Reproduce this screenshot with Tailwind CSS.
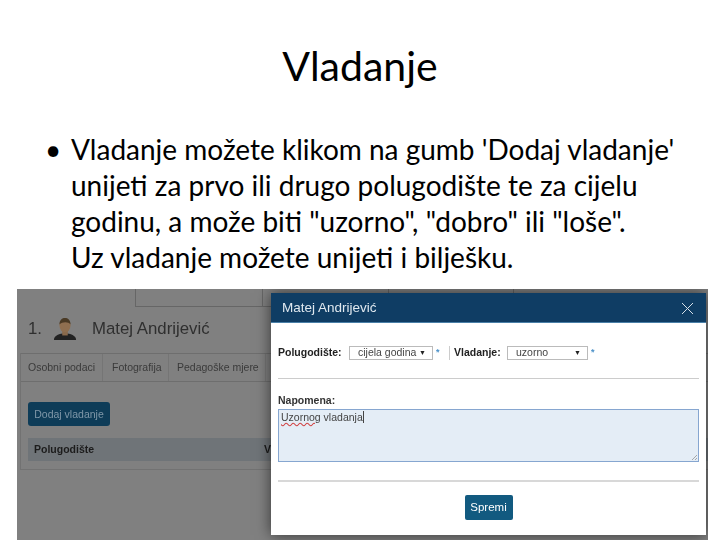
<!DOCTYPE html>
<html lang="en">
<head>
    <meta charset="UTF-8">
    <title>Vladanje</title>
    <script src="https://cdn.jsdelivr.net/npm/@tailwindcss/browser@4"></script>
</head>
<body class="w-[720px] h-[540px] overflow-hidden bg-white font-['Lato',sans-serif] text-black">
    <div class="h-[289px] pt-[41px]">
        <h1 class="text-center text-[41px] leading-[50px] font-normal">Vladanje</h1>
        <ul class="mt-[40px] ml-[45px] w-[650px] text-[28px] leading-[36px]">
            <li class="flex">
                <span class="w-[26px] shrink-0">•</span>
                <span>Vladanje možete klikom na gumb 'Dodaj vladanje' unijeti za prvo ili drugo polugodište te za cijelu godinu, a može biti "uzorno", "dobro" ili "loše".<br>Uz vladanje možete unijeti i bilješku.</span>
            </li>
        </ul>
    </div>

    <!-- screenshot of the app, dimmed behind the dialog -->
    <div class="relative ml-[17px] w-[691px] h-[251px] overflow-hidden bg-[#808080] font-['Liberation_Sans',sans-serif] blur-[0.3px]">
        <div class="flex ml-[118px] h-[18px]">
            <div class="w-[127px] border-l border-b border-[#666]"></div>
            <div class="w-[126px] border-l border-b border-[#666]"></div>
            <div class="w-[125px] border-l border-[#666]"></div>
            <div class="w-[125px] border-l border-[#666]"></div>
        </div>
        <div class="flex items-center mt-[10px] ml-[11px] h-[24px] text-[#2f2f2f] text-[16.8px]">
            <span>1.</span>
            <svg class="ml-[11px] w-[24px] h-[24px]" viewBox="0 0 26 26">
                <path d="M1 25c0-5 6-7 12-7s12 2 12 7z" fill="#222"/>
                <rect x="10" y="14" width="6" height="6" fill="#8a6a4c"/>
                <ellipse cx="13" cy="9" rx="6" ry="7.5" fill="#8f6f50"/>
                <path d="M7 8c0-5 3-7 6-7s6 2 6 7c-2-3-9-3-12 0z" fill="#4a3a25"/>
            </svg>
            <span class="ml-[15px]">Matej Andrijević</span>
        </div>
        <div class="mt-[12px] ml-[3px] h-[117px] border-l border-b border-[#727272]">
            <div class="flex h-[29px] border-t border-b border-[#6e6e6e] text-[10.5px] text-[#3a3a3a] leading-[27px]">
                <span class="w-[82px] pl-[7px] border-r border-[#757575]">Osobni podaci</span>
                <span class="w-[66px] pl-[9px] border-r border-[#757575]">Fotografija</span>
                <span class="w-[97px] pl-[8px] border-r border-[#757575]">Pedagoške mjere</span>
            </div>
            <div class="mt-[20px] ml-[7px] w-[82px] h-[24px] rounded-[3px] bg-[#0e3c58] text-[10.5px] text-[#7f97a8] text-center leading-[24px]">Dodaj vladanje</div>
            <div class="flex items-center mt-[12px] ml-[7px] h-[23px] pl-[6px] bg-[#6f7478] text-[10.5px] font-bold text-[#1c1c1c]">
                <span class="w-[230px]">Polugodište</span>
                <span>V</span>
            </div>
        </div>

        <!-- dialog -->
        <div class="absolute left-[254px] top-[4px] w-[435px] h-[242px] bg-white flex flex-col shadow-[0_0_14px_rgba(0,0,0,0.6)]">
            <div class="flex items-center justify-between h-[30px] pt-px pl-[11px] pr-[12px] bg-[#0f3d64] border-b border-[#4a80a8] text-[13.5px] text-[#dfe8ef]">
                <span>Matej Andrijević</span>
                <svg class="w-[13px] h-[13px]" viewBox="0 0 13 13" stroke="#d6e0e8" stroke-width="1" fill="none"><path d="M1 1l11 11M12 1L1 12"/></svg>
            </div>
            <div class="flex items-center mt-[23px] ml-[7px] h-[14px] text-[10.5px] text-[#444]">
                <b class="w-[64px] font-bold text-[#222]">Polugodište:</b>
                <span class="flex items-center justify-between ml-[7px] w-[84px] h-[14px] pl-[8px] pr-[6px] border border-[#bbb]">cijela godina <i class="text-[7px] not-italic text-[#222]">▼</i></span>
                <span class="w-[16px] pl-[3px] text-[9px] font-bold text-[#4a90c8]">*</span>
                <span class="h-[14px] border-l border-[#ccc]"></span>
                <b class="w-[47px] ml-[4px] font-bold text-[#222]">Vladanje:</b>
                <span class="flex items-center justify-between ml-[6px] w-[81px] h-[14px] pl-[8px] pr-[6px] border border-[#bbb]">uzorno <i class="text-[7px] not-italic text-[#222]">▼</i></span>
                <span class="pl-[3px] text-[9px] font-bold text-[#4a90c8]">*</span>
            </div>
            <div class="mt-[18px] mx-[7px] h-px bg-[#ccc]"></div>
            <div class="mt-[15px] ml-[7px] text-[10.5px] font-bold text-[#333] leading-[12px]">Napomena:</div>
            <div class="relative mt-[3px] mx-[7px] h-[53px] px-[2px] border border-[#86a6d0] bg-[#e4edf6] text-[10.5px] leading-[14px] text-[#444]">
                <span class="underline decoration-wavy decoration-[#d04040]">Uzornog</span> vladanja<span class="border-r border-[#444]"></span>
                <svg class="absolute right-[1px] bottom-[1px] w-[5px] h-[5px]" viewBox="0 0 5 5" stroke="#888" stroke-width="0.7"><path d="M0 5l5-5M3 5l2-2"/></svg>
            </div>
            <div class="mt-[18px] mx-[7px] h-[2px] bg-[#d8d8d8]"></div>
            <div class="mt-[13px] mx-auto w-[48px] h-[25px] rounded-[2px] bg-[#125a80] text-[11.5px] leading-[25px] text-center text-white">Spremi</div>
        </div>
    </div>
</body>
</html>
